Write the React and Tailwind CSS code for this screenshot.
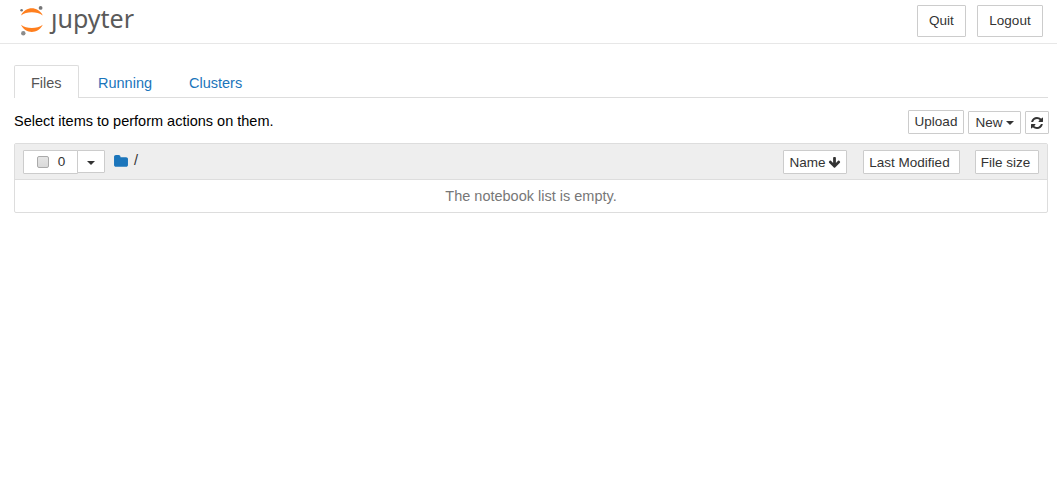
import React from 'react'

const JupyterLogo = () => (
    <div className="flex h-[43px] w-[120px]">
        <svg className="mt-[5px] shrink-0" width="26" height="32" viewBox="0 0 26 32">
            <path d="M2 10.4 C4.4 5.4 8.6 3.3 12.8 3.3 S21.2 5.4 23.8 10.4 C20.8 8.2 17 7.2 12.8 7.2 S4.8 8.2 2 10.4 Z" fill="#ff7f1e" />
            <path d="M2 19.8 C4.4 24.8 8.6 27 12.8 27 S21.2 24.8 23.8 19.8 C20.8 22 17 23 12.8 23 S4.8 22 2 19.8 Z" fill="#ff7f1e" />
            <circle cx="2.6" cy="5.2" r="1.3" fill="#767677" />
            <circle cx="21.6" cy="2.9" r="1.9" fill="#767677" />
            <circle cx="4.3" cy="28.3" r="2.2" fill="#8c8c8c" />
        </svg>
        <span className="ml-[6px] mt-[1px] font-['Noto_Sans',sans-serif] text-[25px] leading-[34px] text-[#5a5a5a]">ȷupyter</span>
    </div>
)

const RefreshIcon = () => (
    <svg width="12" height="14" viewBox="0 0 1536 1792" fill="currentColor">
        <path d="M1511 1056q0 5-1 7-64 268-268 434.5t-478 166.5q-146 0-282.5-55t-243.5-157l-129 129q-19 19-45 19t-45-19-19-45v-448q0-26 19-45t45-19h448q26 0 45 19t19 45-19 45l-137 137q71 66 161 102t187 36q134 0 250-65t186-179q11-17 53-117 8-23 30-23h192q13 0 22.5 9.5t9.5 22.5zm25-800v448q0 26-19 45t-45 19h-448q-26 0-45-19t-19-45 19-45l138-138q-148-137-349-137-134 0-250 65t-186 179q-11 17-53 117-8 23-30 23h-199q-13 0-22.5-9.5t-9.5-22.5v-7q65-268 270-434.5t480-166.5q146 0 284 55.5t245 156.5l130-129q19-19 45-19t45 19 19 45z" />
    </svg>
)

const FolderIcon = () => (
    <svg width="14" height="15" viewBox="0 0 1664 1792" fill="#1b75bb">
        <path d="M1664 608v704q0 92-66 158t-158 66h-1216q-92 0-158-66t-66-158v-960q0-92 66-158t158-66h320q92 0 158 66t66 158v32h672q92 0 158 66t66 158z" />
    </svg>
)

const ArrowDownIcon = () => (
    <svg className="-mt-px" width="13" height="13" viewBox="0 0 1792 1792" fill="currentColor">
        <path d="M1675 832q0 53-37 90l-651 652q-39 37-91 37-53 0-90-37l-651-652q-38-36-38-90 0-53 38-91l74-75q39-37 91-37 53 0 90 37l294 294v-704q0-52 38-90t90-38h128q52 0 90 38t38 90v704l294-294q37-37 90-37 52 0 91 37l75 75q37 39 37 91z" />
    </svg>
)

const Caret = () => (
    <svg width="8" height="4" viewBox="0 0 8 4" fill="currentColor">
        <path d="M0 0h8L4 4z" />
    </svg>
)

const Button = ({ className, children }) => (
    <button className={"flex items-center justify-center whitespace-nowrap border border-[#ccc] bg-white text-[13.5px] text-[#333] " + className}>
        {children}
    </button>
)

const App = () => {
    return (
        <div className="h-[498px] bg-white font-['Liberation_Sans',Arial,sans-serif] text-[14.5px] text-black">
            <header className="flex h-11 justify-between border-b border-[#e7e7e7] pl-[19px] pr-[14px]">
                <JupyterLogo />
                <div className="flex gap-[11px] pt-[5px]">
                    <Button className="h-8 w-[49px] rounded-[1px]">Quit</Button>
                    <Button className="h-8 w-[66px] rounded-[1px]">Logout</Button>
                </div>
            </header>

            <main className="pl-[14px] pr-2 pt-[21px]">
                <nav className="mr-px flex h-[33px] border-b border-[#ddd] leading-5 text-[#1b75bb]">
                    <a className="-mb-px h-[33px] w-[65px] rounded-t-[2px] border border-b-0 border-[#ddd] bg-white pl-4 pt-[7px] text-[#555]">Files</a>
                    <a className="ml-[19px] pt-2">Running</a>
                    <a className="ml-[37px] pt-2">Clusters</a>
                </nav>

                <div className="flex h-[45px] justify-between pt-3">
                    <p className="pt-[1px] leading-5">Select items to perform actions on them.</p>
                    <div className="flex gap-1">
                        <Button className="h-6 w-14 rounded-[1px]">Upload</Button>
                        <Button className="mt-px h-[23px] w-[53px] gap-[3px] rounded-[1px] pt-px">New <Caret /></Button>
                        <Button className="mt-px h-[23px] w-6 rounded-[1px]"><RefreshIcon /></Button>
                    </div>
                </div>

                <section className="mr-px h-[70px] rounded-[2px] border border-[#ddd]">
                    <div className="flex h-9 items-start justify-between border-b border-[#ddd] bg-[#eee] pl-2 pr-2 pt-[6px]">
                        <div className="flex">
                            <Button className="h-6 w-[55px] rounded-l-[1px] pl-px">
                                <span className="mr-[9px] h-3 w-3 rounded-[2px] border border-[#aaa] bg-linear-to-b from-[#e5e5e5] to-[#d9d9d9]"></span>
                                0
                            </Button>
                            <Button className="-ml-px h-[23px] w-7 rounded-r-[1px] pt-[2px]"><Caret /></Button>
                            <div className="ml-[9px] flex h-[22px] items-center gap-[6px] text-[#333]">
                                <FolderIcon />
                                <span>/</span>
                            </div>
                        </div>
                        <div className="flex">
                            <Button className="h-6 w-16 gap-[2px] rounded-[1px] pt-[2px]">Name <ArrowDownIcon /></Button>
                            <Button className="ml-4 h-6 w-[97px] rounded-[1px] pr-1 pt-[2px]">Last Modified</Button>
                            <Button className="ml-[15px] h-6 w-16 rounded-[1px] pr-[3px] pt-[2px]">File size</Button>
                        </div>
                    </div>
                    <div className="pt-[6px] text-center leading-5 text-[#777]">The notebook list is empty.</div>
                </section>
            </main>
        </div>
    )
}

export default App
